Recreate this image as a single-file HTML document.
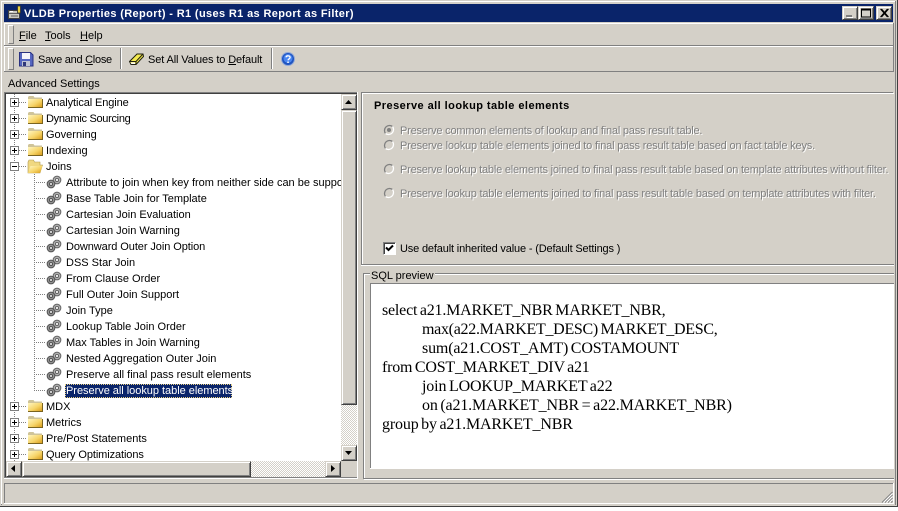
<!DOCTYPE html>
<html><head><meta charset="utf-8"><style>
html,body{margin:0;padding:0;background:#fff}
#w{position:relative;width:898px;height:511px;overflow:hidden;background:#fff;font:11px/13px "Liberation Sans",sans-serif;color:#000}
#w div{position:absolute}
.t{white-space:nowrap;line-height:13px;height:13px;transform:translateY(1px)}
u{text-decoration:underline}
.btn{background:#d4d0c8;box-sizing:border-box;border:1px solid;border-color:#d4d0c8 #404040 #404040 #d4d0c8;box-shadow:inset 1px 1px 0 #fff,inset -1px -1px 0 #808080}
.di{background-image:conic-gradient(#fff 25%,#d4d0c8 0 50%,#fff 0 75%,#d4d0c8 0);background-size:2px 2px}
svg{position:absolute;overflow:visible}
.d{color:#808080;text-shadow:1px 1px 0 #fff;letter-spacing:-.21px}
.s{font:16px/19px "Liberation Serif",serif;white-space:pre;letter-spacing:-.2px;word-spacing:-1.2px}
</style></head><body><div id="w">
<svg width="0" height="0" style="position:absolute"><defs>
<linearGradient id="fg" x1="0" y1="0" x2="1" y2="1"><stop offset="0" stop-color="#fff6c0"/><stop offset=".55" stop-color="#f6d468"/><stop offset="1" stop-color="#d89a18"/></linearGradient>
<symbol id="folder" viewBox="0 0 16 12" width="16" height="12"><path d="M1 2V1l1-1h4.500l1 1.500H15V12H1z" fill="#cfc49a"/><path d="M1 3h14v8.500H1z" fill="url(#fg)"/><path d="M1 11.500h14.500V3" stroke="#7a6420" fill="none"/></symbol>
<symbol id="open" viewBox="0 0 16 15" width="16" height="15"><path d="M1 3l1-2h4.500l1 2H13v3h2.500L13 14H1z" fill="#f0d880" stroke="#b09a50" stroke-width=".6"/><path d="M3.500 7H15.500L13 14H1z" fill="url(#fg)"/></symbol>
<symbol id="gear" viewBox="0 0 16 14" width="16" height="14"><circle cx="11" cy="5" r="3.800" fill="#b4b4b4" stroke="#6a6a6a" stroke-width="1.100"/><circle cx="11" cy="5" r="1.600" fill="#e8e8e8" stroke="#555" stroke-width=".8"/><circle cx="5" cy="9" r="3.800" fill="#969696" stroke="#585858" stroke-width="1.100"/><circle cx="5" cy="9" r="1.600" fill="#d0d0d0" stroke="#444" stroke-width=".8"/></symbol>
<symbol id="plus" viewBox="0 0 9 9" width="9" height="9"><rect x=".5" y=".5" width="8" height="8" fill="#fff" stroke="#808080"/><path d="M2 4.500h5M4.500 2v5" stroke="#000"/></symbol>
<symbol id="minus" viewBox="0 0 9 9" width="9" height="9"><rect x=".5" y=".5" width="8" height="8" fill="#fff" stroke="#808080"/><path d="M2 4.500h5" stroke="#000"/></symbol>
<symbol id="radio" viewBox="0 0 12 12" width="12" height="12"><path d="M2.500 9.500a5 5 0 0 1 7-7" fill="none" stroke="#808080" stroke-width="1.300"/><path d="M2.500 9.500a5 5 0 0 0 7-7" fill="none" stroke="#fff" stroke-width="1.300"/></symbol>
</defs></svg>

<!-- window frame -->
<div style="left:0;top:0;width:898px;height:507px;background:#404040"></div>
<div style="left:0;top:0;width:897px;height:506px;background:#d4d0c8"></div>
<div style="left:1px;top:1px;width:895px;height:504px;background:#808080"></div>
<div style="left:1px;top:1px;width:894px;height:503px;background:#fff"></div>
<div style="left:2px;top:2px;width:893px;height:503px;background:#d4d0c8"></div>

<!-- title -->
<div style="left:4px;top:4px;width:889px;height:18px;background:#0a246a"></div>
<svg style="left:8px;top:5px" width="15" height="15" viewBox="0 0 15 15"><rect x=".5" y="5.500" width="11" height="8" fill="#c8c8c0" stroke="#404040"/><path d="M1 8.500h10M3 11h7" stroke="#606060"/><rect x="2" y="6" width="3" height="1" fill="#fff"/><rect x="9.500" y="1" width="3" height="7" fill="#e8d040" stroke="#303030" stroke-width=".8"/></svg>
<div class="t" style="left:24px;top:7px;color:#fff;font-weight:bold;letter-spacing:.36px">VLDB Properties (Report) - R1 (uses R1 as Report as Filter)</div>
<div class="btn" style="left:842px;top:6px;width:16px;height:14px"></div>
<svg style="left:846px;top:15px" width="8" height="3"><rect width="6" height="2" fill="#808080"/><rect x="1" y="2" width="6" height="1" fill="#fff"/></svg>
<div class="btn" style="left:858px;top:6px;width:16px;height:14px"></div>
<svg style="left:861px;top:8px" width="10" height="10"><rect x=".5" y="1" width="9" height="8" fill="none" stroke="#000"/><path d="M0 1.500h10" stroke="#000" stroke-width="2"/></svg>
<div class="btn" style="left:876px;top:6px;width:16px;height:14px"></div>
<svg style="left:880px;top:9px" width="9" height="8"><path d="M.5 0 7.500 8M1.500 0 8.500 8M7.500 0 .5 8M8.500 0 1.500 8" stroke="#000" stroke-width="1"/></svg>

<!-- menu band -->
<div style="left:4px;top:23px;width:889px;height:1px;background:#fff"></div>
<div style="left:4px;top:23px;width:1px;height:48px;background:#fff"></div>
<div style="left:893px;top:23px;width:1px;height:49px;background:#808080"></div>
<div style="left:4px;top:45px;width:889px;height:1px;background:#808080"></div>
<div style="left:4px;top:46px;width:889px;height:1px;background:#fff"></div>
<div style="left:4px;top:71px;width:890px;height:1px;background:#808080"></div>
<div style="left:8px;top:25px;width:4px;height:17px;background:#d4d0c8;border:1px solid;border-color:#fff #808080 #808080 #fff"></div>
<div style="left:8px;top:48px;width:4px;height:20px;background:#d4d0c8;border:1px solid;border-color:#fff #808080 #808080 #fff"></div>
<div class="t" style="left:19px;top:29px"><u>F</u>ile</div>
<div class="t" style="left:45px;top:29px"><u>T</u>ools</div>
<div class="t" style="left:80px;top:29px"><u>H</u>elp</div>

<!-- toolbar -->
<svg style="left:19px;top:52px" width="15" height="15" viewBox="0 0 15 15"><path d="M.5.500h11l2.500 2.500v11H.500z" fill="#5566c0" stroke="#2a3280"/><rect x="3" y="1" width="8" height="6" fill="#f4f4fa"/><rect x="3" y="9" width="8" height="5" fill="#c0c4d4"/><rect x="4" y="10" width="3" height="4" fill="#30387a"/></svg>
<div class="t" style="left:38px;top:53px;letter-spacing:-.27px">Save and <u>C</u>lose</div>
<div style="left:120px;top:48px;width:1px;height:21px;background:#808080"></div>
<div style="left:121px;top:48px;width:1px;height:21px;background:#fff"></div>
<svg style="left:129px;top:53px" width="15" height="13" viewBox="0 0 15 13"><path d="M.5 8.500 8 1h6l.5 2.500L7 11.500H2z" fill="#f4ea50" stroke="#202010"/><path d="M.5 8.500H7l7-7.500M7 8.500v3" fill="none" stroke="#202010"/><path d="M1.500 9.500h4.500v1.500H2.500z" fill="#fff"/></svg>
<div class="t" style="left:148px;top:53px;letter-spacing:-.12px">Set All Values to <u>D</u>efault</div>
<div style="left:271px;top:48px;width:1px;height:21px;background:#808080"></div>
<div style="left:272px;top:48px;width:1px;height:21px;background:#fff"></div>
<svg style="left:281px;top:52px" width="14" height="14" viewBox="0 0 14 14"><circle cx="7" cy="7" r="6.500" fill="#1f54c0" stroke="#90a8d8"/><circle cx="7" cy="6.500" r="4.500" fill="#4a86f0"/><path d="M5 5.300c.3-2 4.300-2 4.100.3-.1 1.300-2 1.400-2.100 2.700" fill="none" stroke="#fff" stroke-width="1.300"/><rect x="6.300" y="9.500" width="1.500" height="1.500" fill="#fff"/></svg>

<div class="t" style="left:8px;top:77px">Advanced Settings</div>

<!-- band line -->
<div style="left:361px;top:92px;width:532px;height:1px;background:#808080"></div>
<div style="left:361px;top:93px;width:533px;height:1px;background:#fff"></div>

<!-- tree frame -->
<div style="left:4px;top:92px;width:354px;height:387px;background:#fff"></div>
<div style="left:4px;top:92px;width:353px;height:386px;background:#808080"></div>
<div style="left:5px;top:93px;width:352px;height:384px;background:#404040"></div>
<div style="left:6px;top:94px;width:335px;height:367px;background:#fff;overflow:hidden">
 <div style="left:8px;top:0;width:1px;height:367px;background-image:linear-gradient(#808080 50%,transparent 0);background-size:1px 2px"></div>
 <div style="left:28px;top:80px;width:1px;height:217px;background-image:linear-gradient(#808080 50%,transparent 0);background-size:1px 2px"></div>
</div>
<div style="left:6px;top:94px;width:335px;height:367px;overflow:hidden">
<svg style="left:9px;top:8px" width="12" height="360"><g stroke="#808080" stroke-dasharray="1 1"><path d="M4 .500h8M4 16.500h8M4 32.500h8M4 48.500h8M4 64.500h8M4 304.500h8M4 320.500h8M4 336.500h8M4 352.500h8"/></g></svg>
<svg style="left:28px;top:88px" width="14" height="210"><g stroke="#808080" stroke-dasharray="1 1"><path d="M0 .500h12M0 16.500h12M0 32.500h12M0 48.500h12M0 64.500h12M0 80.500h12M0 96.500h12M0 112.500h12M0 128.500h12M0 144.500h12M0 160.500h12M0 176.500h12M0 192.500h12M0 208.500h12"/></g></svg>
<svg style="left:4px;top:4px" width="9" height="9"><use href="#plus"/></svg>
<svg style="left:4px;top:20px" width="9" height="9"><use href="#plus"/></svg>
<svg style="left:4px;top:36px" width="9" height="9"><use href="#plus"/></svg>
<svg style="left:4px;top:52px" width="9" height="9"><use href="#plus"/></svg>
<svg style="left:4px;top:68px" width="9" height="9"><use href="#minus"/></svg>
<svg style="left:4px;top:308px" width="9" height="9"><use href="#plus"/></svg>
<svg style="left:4px;top:324px" width="9" height="9"><use href="#plus"/></svg>
<svg style="left:4px;top:340px" width="9" height="9"><use href="#plus"/></svg>
<svg style="left:4px;top:356px" width="9" height="9"><use href="#plus"/></svg>
<svg style="left:21px;top:2px" width="16" height="12"><use href="#folder"/></svg>
<svg style="left:21px;top:18px" width="16" height="12"><use href="#folder"/></svg>
<svg style="left:21px;top:34px" width="16" height="12"><use href="#folder"/></svg>
<svg style="left:21px;top:50px" width="16" height="12"><use href="#folder"/></svg>
<svg style="left:21px;top:65px" width="16" height="15"><use href="#open"/></svg>
<svg style="left:21px;top:306px" width="16" height="12"><use href="#folder"/></svg>
<svg style="left:21px;top:322px" width="16" height="12"><use href="#folder"/></svg>
<svg style="left:21px;top:338px" width="16" height="12"><use href="#folder"/></svg>
<svg style="left:21px;top:354px" width="16" height="12"><use href="#folder"/></svg>
<svg style="left:40px;top:81px" width="16" height="14"><use href="#gear"/></svg>
<svg style="left:40px;top:97px" width="16" height="14"><use href="#gear"/></svg>
<svg style="left:40px;top:113px" width="16" height="14"><use href="#gear"/></svg>
<svg style="left:40px;top:129px" width="16" height="14"><use href="#gear"/></svg>
<svg style="left:40px;top:145px" width="16" height="14"><use href="#gear"/></svg>
<svg style="left:40px;top:161px" width="16" height="14"><use href="#gear"/></svg>
<svg style="left:40px;top:177px" width="16" height="14"><use href="#gear"/></svg>
<svg style="left:40px;top:193px" width="16" height="14"><use href="#gear"/></svg>
<svg style="left:40px;top:209px" width="16" height="14"><use href="#gear"/></svg>
<svg style="left:40px;top:225px" width="16" height="14"><use href="#gear"/></svg>
<svg style="left:40px;top:241px" width="16" height="14"><use href="#gear"/></svg>
<svg style="left:40px;top:257px" width="16" height="14"><use href="#gear"/></svg>
<svg style="left:40px;top:273px" width="16" height="14"><use href="#gear"/></svg>
<svg style="left:40px;top:289px" width="16" height="14"><use href="#gear"/></svg>
<div class="t" style="left:40px;top:2px;letter-spacing:-.1px">Analytical Engine</div>
<div class="t" style="left:40px;top:18px;letter-spacing:-.3px">Dynamic Sourcing</div>
<div class="t" style="left:40px;top:34px">Governing</div>
<div class="t" style="left:40px;top:50px">Indexing</div>
<div class="t" style="left:40px;top:66px">Joins</div>
<div class="t" style="left:60px;top:82px">Attribute to join when key from neither side can be supported</div>
<div class="t" style="left:60px;top:98px">Base Table Join for Template</div>
<div class="t" style="left:60px;top:114px">Cartesian Join Evaluation</div>
<div class="t" style="left:60px;top:130px">Cartesian Join Warning</div>
<div class="t" style="left:60px;top:146px;letter-spacing:-.08px">Downward Outer Join Option</div>
<div class="t" style="left:60px;top:162px">DSS Star Join</div>
<div class="t" style="left:60px;top:178px">From Clause Order</div>
<div class="t" style="left:60px;top:194px">Full Outer Join Support</div>
<div class="t" style="left:60px;top:210px">Join Type</div>
<div class="t" style="left:60px;top:226px">Lookup Table Join Order</div>
<div class="t" style="left:60px;top:242px">Max Tables in Join Warning</div>
<div class="t" style="left:60px;top:258px">Nested Aggregation Outer Join</div>
<div class="t" style="left:60px;top:274px">Preserve all final pass result elements</div>
<div style="left:59px;top:290px;width:167px;height:14px;background:#0a246a;outline:1px dotted #e8d080;outline-offset:-1px"></div>
<div class="t" style="left:60px;top:290px;color:#fff;letter-spacing:-.03px">Preserve all lookup table elements</div>
<div class="t" style="left:40px;top:306px">MDX</div>
<div class="t" style="left:40px;top:322px">Metrics</div>
<div class="t" style="left:40px;top:338px">Pre/Post Statements</div>
<div class="t" style="left:40px;top:354px;letter-spacing:-.1px">Query Optimizations</div>
</div>

<!-- tree scrollbars -->
<div style="left:341px;top:94px;width:16px;height:383px;background:#d4d0c8"></div>
<div class="di" style="left:341px;top:405px;width:16px;height:40px"></div>
<div class="btn" style="left:341px;top:94px;width:16px;height:16px"></div>
<svg style="left:345px;top:100px" width="8" height="4"><path d="M3.500 0 7 4H0z" fill="#000"/></svg>
<div class="btn" style="left:341px;top:110px;width:16px;height:295px"></div>
<div class="btn" style="left:341px;top:445px;width:16px;height:16px"></div>
<svg style="left:345px;top:451px" width="8" height="4"><path d="M0 0h7L3.500 4z" fill="#000"/></svg>
<div class="di" style="left:6px;top:461px;width:335px;height:16px"></div>
<div class="btn" style="left:6px;top:461px;width:16px;height:16px"></div>
<svg style="left:11px;top:465px" width="4" height="8"><path d="M4 0v7L0 3.500z" fill="#000"/></svg>
<div class="btn" style="left:22px;top:461px;width:229px;height:16px"></div>
<div class="btn" style="left:325px;top:461px;width:16px;height:16px"></div>
<svg style="left:331px;top:465px" width="4" height="8"><path d="M0 0v7l4-3.500z" fill="#000"/></svg>

<!-- right panel -->
<div style="left:361px;top:93px;width:1px;height:172px;background:#808080"></div>
<div style="left:362px;top:94px;width:1px;height:170px;background:#fff"></div>
<div style="left:361px;top:264px;width:533px;height:1px;background:#808080"></div>
<div style="left:361px;top:265px;width:533px;height:1px;background:#fff"></div>
<div class="t" style="left:374px;top:99px;font-weight:bold;letter-spacing:.45px">Preserve all lookup table elements</div>
<svg style="left:383px;top:124px" width="12" height="12"><use href="#radio"/><circle cx="6" cy="6" r="2" fill="#808080"/></svg>
<svg style="left:383px;top:139px" width="12" height="12"><use href="#radio"/></svg>
<svg style="left:383px;top:163px" width="12" height="12"><use href="#radio"/></svg>
<svg style="left:383px;top:187px" width="12" height="12"><use href="#radio"/></svg>
<div class="t d" style="left:400px;top:124px">Preserve common elements of lookup and final pass result table.</div>
<div class="t d" style="left:400px;top:139px;letter-spacing:-.165px">Preserve lookup table elements joined to final pass result table based on fact table keys.</div>
<div class="t d" style="left:400px;top:163px">Preserve lookup table elements joined to final pass result table based on template attributes without filter.</div>
<div class="t d" style="left:400px;top:187px;letter-spacing:-.19px">Preserve lookup table elements joined to final pass result table based on template attributes with filter.</div>
<div style="left:383px;top:242px;width:11px;height:11px;background:#fff;border:1px solid;border-color:#808080 #fff #fff #808080;box-shadow:inset 1px 1px 0 #404040"></div>
<svg style="left:385px;top:244px" width="9" height="9"><path d="M1 3.500l2.500 2.500L8 1.500" fill="none" stroke="#000" stroke-width="2"/></svg>
<div class="t" style="left:400px;top:242px;letter-spacing:-.16px">Use default inherited value - (Default Settings )</div>

<!-- SQL group -->
<div style="left:363px;top:273px;width:1px;height:205px;background:#808080"></div>
<div style="left:364px;top:274px;width:1px;height:204px;background:#fff"></div>
<div style="left:363px;top:273px;width:531px;height:1px;background:#808080"></div>
<div style="left:364px;top:274px;width:530px;height:1px;background:#fff"></div>
<div style="left:363px;top:478px;width:531px;height:1px;background:#808080"></div>
<div style="left:364px;top:479px;width:530px;height:1px;background:#fff"></div>
<div class="t" style="left:370px;top:269px;background:#d4d0c8;padding:0 1px">SQL preview</div>
<div style="left:370px;top:283px;width:524px;height:185px;background:#808080"></div>
<div style="left:371px;top:284px;width:523px;height:184px;background:#fff"></div>
<div style="left:370px;top:468px;width:524px;height:1px;background:#fff"></div>
<div class="s" style="left:382px;top:301px">select a21.MARKET_NBR MARKET_NBR,</div>
<div class="s" style="left:422px;top:320px;letter-spacing:-.29px">max(a22.MARKET_DESC) MARKET_DESC,</div>
<div class="s" style="left:422px;top:339px;letter-spacing:-.16px">sum(a21.COST_AMT) COSTAMOUNT</div>
<div class="s" style="left:382px;top:358px">from COST_MARKET_DIV a21</div>
<div class="s" style="left:422px;top:377px;letter-spacing:-.15px">join LOOKUP_MARKET a22</div>
<div class="s" style="left:422px;top:396px;letter-spacing:-.15px">on (a21.MARKET_NBR = a22.MARKET_NBR)</div>
<div class="s" style="left:382px;top:415px;letter-spacing:-.16px">group by a21.MARKET_NBR</div>

<!-- status -->
<div style="left:4px;top:483px;width:889px;height:1px;background:#808080"></div>
<div style="left:4px;top:483px;width:1px;height:20px;background:#808080"></div>
<div style="left:4px;top:503px;width:890px;height:1px;background:#fff"></div>
<div style="left:893px;top:483px;width:1px;height:21px;background:#fff"></div>
<svg style="left:881px;top:491px" width="12" height="12"><path d="M11.500 1 1 11.500M11.500 4 4 11.500M11.500 7 7 11.500M11.500 10 10 11.500" stroke="#808080" stroke-width="1"/><path d="M11.500 2.500 2.500 11.500M11.500 5.500 5.500 11.500M11.500 8.500 8.500 11.500" stroke="#fff" stroke-width="1"/></svg>
</div></body></html>
